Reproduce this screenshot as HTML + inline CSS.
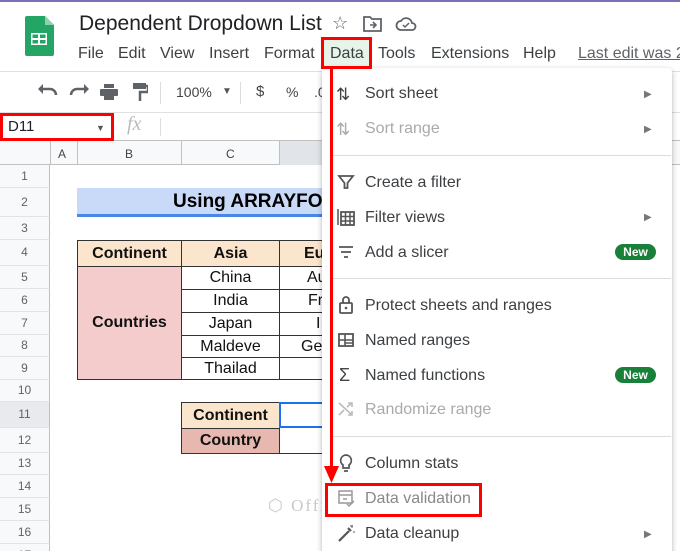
<!DOCTYPE html>
<html><head><meta charset="utf-8"><style>
*{box-sizing:border-box;margin:0;padding:0}
html,body{width:680px;height:551px;overflow:hidden}
body{background:#fff;font-family:"Liberation Sans",Arial,sans-serif;position:relative;color:#202124}
.a{position:absolute}
.mi{position:absolute;font-size:16px;color:#3c4043;white-space:nowrap}
.row{position:absolute;left:0;width:50px;text-align:center;font-size:12px;color:#5f6368;border-bottom:1px solid #e2e3e3;background:#f8f9fa;border-right:1px solid #c0c0c0}
.c{position:absolute;border:1px solid #333;display:flex;align-items:center;justify-content:center;font-size:16px;color:#111}
.it{position:absolute;left:365px;font-size:16px;color:#3c4043}
.g{color:#aaa}
.ic{position:absolute;left:336px;width:20px;height:20px}
.arr{position:absolute;left:644px;font-size:10px;color:#777}
.new{position:absolute;left:615px;width:41px;height:16px;border-radius:8px;background:#188038;color:#fff;font-size:12px;font-weight:bold;text-align:center;line-height:16px}
.hr{position:absolute;left:333px;width:338px;height:1px;background:#dadce0}
</style></head><body>
<div class="a" style="left:0;top:0;width:680px;height:2px;background:#7b6fb5"></div>
<svg class="a" style="left:25px;top:16px" width="29" height="40" viewBox="0 0 29 40"><path d="M2 0h18l9 9v29a2 2 0 0 1-2 2H2a2 2 0 0 1-2-2V2a2 2 0 0 1 2-2z" fill="#23a566"/><path d="M20 0v9h9z" fill="#8ed1b1"/><rect x="6" y="17" width="16" height="12" fill="#fff"/><rect x="7.5" y="18.5" width="5.5" height="3.5" fill="#23a566"/><rect x="15" y="18.5" width="5.5" height="3.5" fill="#23a566"/><rect x="7.5" y="24" width="5.5" height="3.5" fill="#23a566"/><rect x="15" y="24" width="5.5" height="3.5" fill="#23a566"/></svg>
<div class="a" style="left:79px;top:12px;font-size:21px;color:#202124">Dependent Dropdown List</div>
<div class="a" style="left:332px;top:13px;font-size:18px;color:#5f6368">☆</div>
<svg class="a" style="left:363px;top:16px" width="20" height="16" viewBox="0 0 20 16"><path d="M1 1h6l2 2h9v12H1z" fill="none" stroke="#5f6368" stroke-width="1.8"/><path d="M7 9h6M10 6l3 3-3 3" stroke="#5f6368" stroke-width="1.6" fill="none"/></svg>
<svg class="a" style="left:395px;top:16px" width="22" height="16" viewBox="0 0 22 16"><path d="M6 14a4.5 4.5 0 0 1 0-9 6 6 0 0 1 11 2 3.5 3.5 0 0 1 0 7z" fill="none" stroke="#5f6368" stroke-width="1.8"/><path d="M8 9l2 2 4-4" stroke="#5f6368" stroke-width="1.5" fill="none"/></svg>
<div class="mi" style="left:78px;top:45px">File</div>
<div class="mi" style="left:118px;top:45px">Edit</div>
<div class="mi" style="left:160px;top:45px">View</div>
<div class="mi" style="left:209px;top:45px">Insert</div>
<div class="mi" style="left:264px;top:45px">Format</div>
<div class="a" style="left:323px;top:39px;width:47px;height:28px;background:#e6f4ea"></div>
<div class="mi" style="left:330px;top:45px">Data</div>
<div class="mi" style="left:378px;top:45px">Tools</div>
<div class="mi" style="left:431px;top:45px">Extensions</div>
<div class="mi" style="left:523px;top:45px">Help</div>
<div class="mi" style="left:578px;top:45px;color:#5f6368;text-decoration:underline">Last edit was 2</div>
<div class="a" style="left:0;top:71px;width:680px;height:1px;background:#e0e0e0"></div>
<svg class="a" style="left:38px;top:84px" width="20" height="14" viewBox="0 0 20 14"><path d="M4 5h8a6 6 0 0 1 6 6" fill="none" stroke="#5f6368" stroke-width="2.5"/><path d="M0 5l5-5v10z" fill="#5f6368"/></svg>
<svg class="a" style="left:69px;top:84px" width="20" height="14" viewBox="0 0 20 14"><path d="M16 5H8a6 6 0 0 0-6 6" fill="none" stroke="#5f6368" stroke-width="2.5"/><path d="M20 5l-5-5v10z" fill="#5f6368"/></svg>
<svg class="a" style="left:100px;top:84px" width="18" height="16" viewBox="0 0 18 16"><rect x="4" y="0" width="10" height="4" fill="#5f6368"/><rect x="0" y="5" width="18" height="7" rx="1" fill="#5f6368"/><rect x="4" y="10" width="10" height="6" fill="#5f6368"/></svg>
<svg class="a" style="left:133px;top:83px" width="15" height="18" viewBox="0 0 15 18"><rect x="0" y="0" width="13" height="6" fill="#5f6368"/><path d="M13 3h2v6H7v9" stroke="#5f6368" stroke-width="2.5" fill="none"/></svg>
<div class="a" style="left:160px;top:82px;width:1px;height:22px;background:#dadce0"></div>
<div class="a" style="left:176px;top:84px;font-size:14px;color:#444">100%</div>
<div class="a" style="left:222px;top:86px;font-size:10px;color:#555">▼</div>
<div class="a" style="left:240px;top:82px;width:1px;height:22px;background:#dadce0"></div>
<div class="a" style="left:256px;top:83px;font-size:15px;color:#444">$</div>
<div class="a" style="left:286px;top:84px;font-size:14px;color:#444">%</div>
<div class="a" style="left:314px;top:84px;font-size:14px;color:#444">.0</div>
<div class="a" style="left:0;top:112px;width:680px;height:1px;background:#e0e0e0"></div>
<div class="a" style="left:8px;top:118px;font-size:15px;color:#202124">D11</div>
<div class="a" style="left:96px;top:123px;font-size:9px;color:#555">▼</div>
<div class="a" style="left:127px;top:113px;font-size:20px;color:#bbb;font-style:italic;font-family:'Liberation Serif',serif">fx</div>
<div class="a" style="left:160px;top:118px;width:1px;height:18px;background:#ddd"></div>
<div class="a" style="left:0;top:140px;width:680px;height:1px;background:#c0c0c0"></div>
<div class="a" style="left:0;top:141px;width:680px;height:24px;background:#f8f9fa;border-bottom:1px solid #c0c0c0"></div>
<div class="a" style="left:279px;top:141px;width:45px;height:24px;background:#e1e4e8"></div>
<div class="a" style="left:50px;top:141px;width:1px;height:24px;background:#c0c0c0"></div>
<div class="a" style="left:77px;top:141px;width:1px;height:24px;background:#c0c0c0"></div>
<div class="a" style="left:181px;top:141px;width:1px;height:24px;background:#c0c0c0"></div>
<div class="a" style="left:279px;top:141px;width:1px;height:24px;background:#c0c0c0"></div>
<div class="a" style="left:58px;top:147px;font-size:12px;color:#444">A</div>
<div class="a" style="left:125px;top:147px;font-size:12px;color:#444">B</div>
<div class="a" style="left:226px;top:147px;font-size:12px;color:#444">C</div>
<div class="row" style="top:165px;height:23px;line-height:22px">1</div>
<div class="row" style="top:188px;height:29px;line-height:28px">2</div>
<div class="row" style="top:217px;height:23px;line-height:22px">3</div>
<div class="row" style="top:240px;height:26px;line-height:25px">4</div>
<div class="row" style="top:266px;height:23px;line-height:22px">5</div>
<div class="row" style="top:289px;height:23px;line-height:22px">6</div>
<div class="row" style="top:312px;height:23px;line-height:22px">7</div>
<div class="row" style="top:335px;height:22px;line-height:21px">8</div>
<div class="row" style="top:357px;height:23px;line-height:22px">9</div>
<div class="row" style="top:380px;height:22px;line-height:21px">10</div>
<div class="row" style="top:402px;height:26px;line-height:25px;background:#e8eaed">11</div>
<div class="row" style="top:428px;height:25px;line-height:24px">12</div>
<div class="row" style="top:453px;height:22px;line-height:21px">13</div>
<div class="row" style="top:475px;height:23px;line-height:22px">14</div>
<div class="row" style="top:498px;height:23px;line-height:22px">15</div>
<div class="row" style="top:521px;height:23px;line-height:22px">16</div>
<div class="row" style="top:544px;height:23px;line-height:22px">17</div>
<div class="a" style="left:77px;top:188px;width:250px;height:29px;background:#c9daf8;border-bottom:3px solid #4a86e8"></div>
<div class="a" style="left:173px;top:191px;font-size:19px;font-weight:bold;color:#000">Using ARRAYFO</div>
<div class="c" style="left:77px;top:240px;width:105px;height:27px;background:#fce5cd;font-weight:bold">Continent</div>
<div class="c" style="left:181px;top:240px;width:99px;height:27px;background:#fce5cd;font-weight:bold">Asia</div>
<div class="c" style="left:279px;top:240px;width:50px;height:27px;background:#fce5cd;font-weight:bold;justify-content:flex-start;padding-left:24px">Eu</div>
<div class="c" style="left:77px;top:266px;width:105px;height:114px;background:#f4cccc;font-weight:bold">Countries</div>
<div class="c" style="left:181px;top:266px;width:99px;height:24px">China</div>
<div class="c" style="left:181px;top:289px;width:99px;height:24px">India</div>
<div class="c" style="left:181px;top:312px;width:99px;height:24px">Japan</div>
<div class="c" style="left:181px;top:335px;width:99px;height:23px">Maldeve</div>
<div class="c" style="left:181px;top:357px;width:99px;height:23px">Thailad</div>
<div class="c" style="left:279px;top:266px;width:50px;height:24px;justify-content:flex-start;padding-left:27px">Au</div>
<div class="c" style="left:279px;top:289px;width:50px;height:24px;justify-content:flex-start;padding-left:28px">Fr</div>
<div class="c" style="left:279px;top:312px;width:50px;height:24px;justify-content:flex-start;padding-left:36px">I</div>
<div class="c" style="left:279px;top:335px;width:50px;height:23px;justify-content:flex-start;padding-left:21px">Ger</div>
<div class="c" style="left:279px;top:357px;width:50px;height:23px"></div>
<div class="c" style="left:181px;top:402px;width:99px;height:27px;background:#fce5cd;font-weight:bold;font-size:16px">Continent</div>
<div class="c" style="left:181px;top:428px;width:99px;height:26px;background:#e6b8af;font-weight:bold;font-size:16px">Country</div>
<div class="a" style="left:279px;top:402px;width:50px;height:26px;border:2px solid #1a73e8"></div>
<div class="a" style="left:279px;top:428px;width:50px;height:26px;border:1px solid #333;border-top:none"></div>
<div class="a" style="left:268px;top:496px;font-size:17px;color:#c8c8c8;font-family:'Liberation Serif',serif;letter-spacing:2px">⬡ OfficeWheel</div>
<div class="a" style="left:322px;top:68px;width:350px;height:490px;background:#fff;box-shadow:0 2px 6px rgba(0,0,0,.3);border-radius:4px"></div>
<div class="a" style="left:336px;top:85px;font-size:17px;color:#444">⇅</div><div class="it" style="top:85px">Sort sheet</div><div class="arr" style="top:89px">▶</div>
<div class="a g" style="left:336px;top:120px;font-size:17px">⇅</div><div class="it g" style="top:120px">Sort range</div><div class="arr" style="top:124px">▶</div>
<div class="hr" style="top:155px"></div>
<svg class="ic" style="top:172px" viewBox="0 0 20 20"><path d="M3 4h14l-5.5 7v5h-3v-5z" fill="none" stroke="#555" stroke-width="1.8"/></svg><div class="it" style="top:174px">Create a filter</div>
<svg class="ic" style="top:207px" viewBox="0 0 20 20"><rect x="5" y="5" width="13" height="13" fill="none" stroke="#555" stroke-width="1.8"/><path d="M2 2v16M5 9.5h13M5 14h13M9.5 5v13M14 5v13" stroke="#555" stroke-width="1.5"/></svg><div class="it" style="top:209px">Filter views</div><div class="arr" style="top:212px">▶</div>
<svg class="ic" style="top:242px" viewBox="0 0 20 20"><path d="M3 5h14M5 10h10M8 15h4" stroke="#555" stroke-width="1.8"/></svg><div class="it" style="top:244px">Add a slicer</div><div class="new" style="top:244px">New</div>
<div class="hr" style="top:278px"></div>
<svg class="ic" style="top:295px" viewBox="0 0 20 20"><rect x="4" y="8" width="12" height="10" rx="1" fill="none" stroke="#555" stroke-width="1.8"/><path d="M7 8V5a3 3 0 0 1 6 0v3" fill="none" stroke="#555" stroke-width="1.8"/><circle cx="10" cy="13" r="1.3" fill="#555"/></svg><div class="it" style="top:297px">Protect sheets and ranges</div>
<svg class="ic" style="top:330px" viewBox="0 0 20 20"><rect x="3" y="4" width="14" height="12" fill="none" stroke="#555" stroke-width="1.8"/><path d="M3 10h14M9 4v12M9 13h8" stroke="#555" stroke-width="1.6"/></svg><div class="it" style="top:332px">Named ranges</div>
<div class="a" style="left:339px;top:365px;font-size:18px;color:#444">Σ</div><div class="it" style="top:367px">Named functions</div><div class="new" style="top:367px">New</div>
<svg class="ic" style="top:399px" viewBox="0 0 20 20"><path d="M3 4l13 12M12 16h4v-4M3 16l5-5M11 8l5-4M12 4h4v4" fill="none" stroke="#bbb" stroke-width="1.6"/></svg><div class="it g" style="top:401px">Randomize range</div>
<div class="hr" style="top:436px"></div>
<svg class="ic" style="top:453px" viewBox="0 0 20 20"><path d="M10 2a5.5 5.5 0 0 0-3 10v3h6v-3a5.5 5.5 0 0 0-3-10zM8 18h4" fill="none" stroke="#555" stroke-width="1.7"/></svg><div class="it" style="top:455px">Column stats</div>
<svg class="ic" style="top:488px" viewBox="0 0 20 20"><rect x="3" y="3" width="13" height="12" fill="none" stroke="#999" stroke-width="1.5"/><path d="M3 7h13M7 11h4M11 16l2 2 5-5" fill="none" stroke="#999" stroke-width="1.5"/></svg><div class="it" style="top:490px;color:#888">Data validation</div>
<svg class="ic" style="top:523px" viewBox="0 0 20 20"><path d="M3 18l10-10M12 5l3 3" stroke="#555" stroke-width="2.2"/><path d="M16 2v3M17 9h2M14 3h3" stroke="#777" stroke-width="1.2"/></svg><div class="it" style="top:525px">Data cleanup</div><div class="arr" style="top:529px">▶</div>
<div class="a" style="left:321px;top:37px;width:51px;height:32px;border:3px solid #f00"></div>
<div class="a" style="left:0;top:113px;width:114px;height:28px;border:3px solid #f00"></div>
<div class="a" style="left:325px;top:483px;width:157px;height:34px;border:3px solid #f00"></div>
<div class="a" style="left:330px;top:69px;width:3px;height:402px;background:#f00"></div>
<svg class="a" style="left:324px;top:466px" width="15" height="17"><path d="M0 0h15L7.5 17z" fill="#f00"/></svg>
</body></html>
